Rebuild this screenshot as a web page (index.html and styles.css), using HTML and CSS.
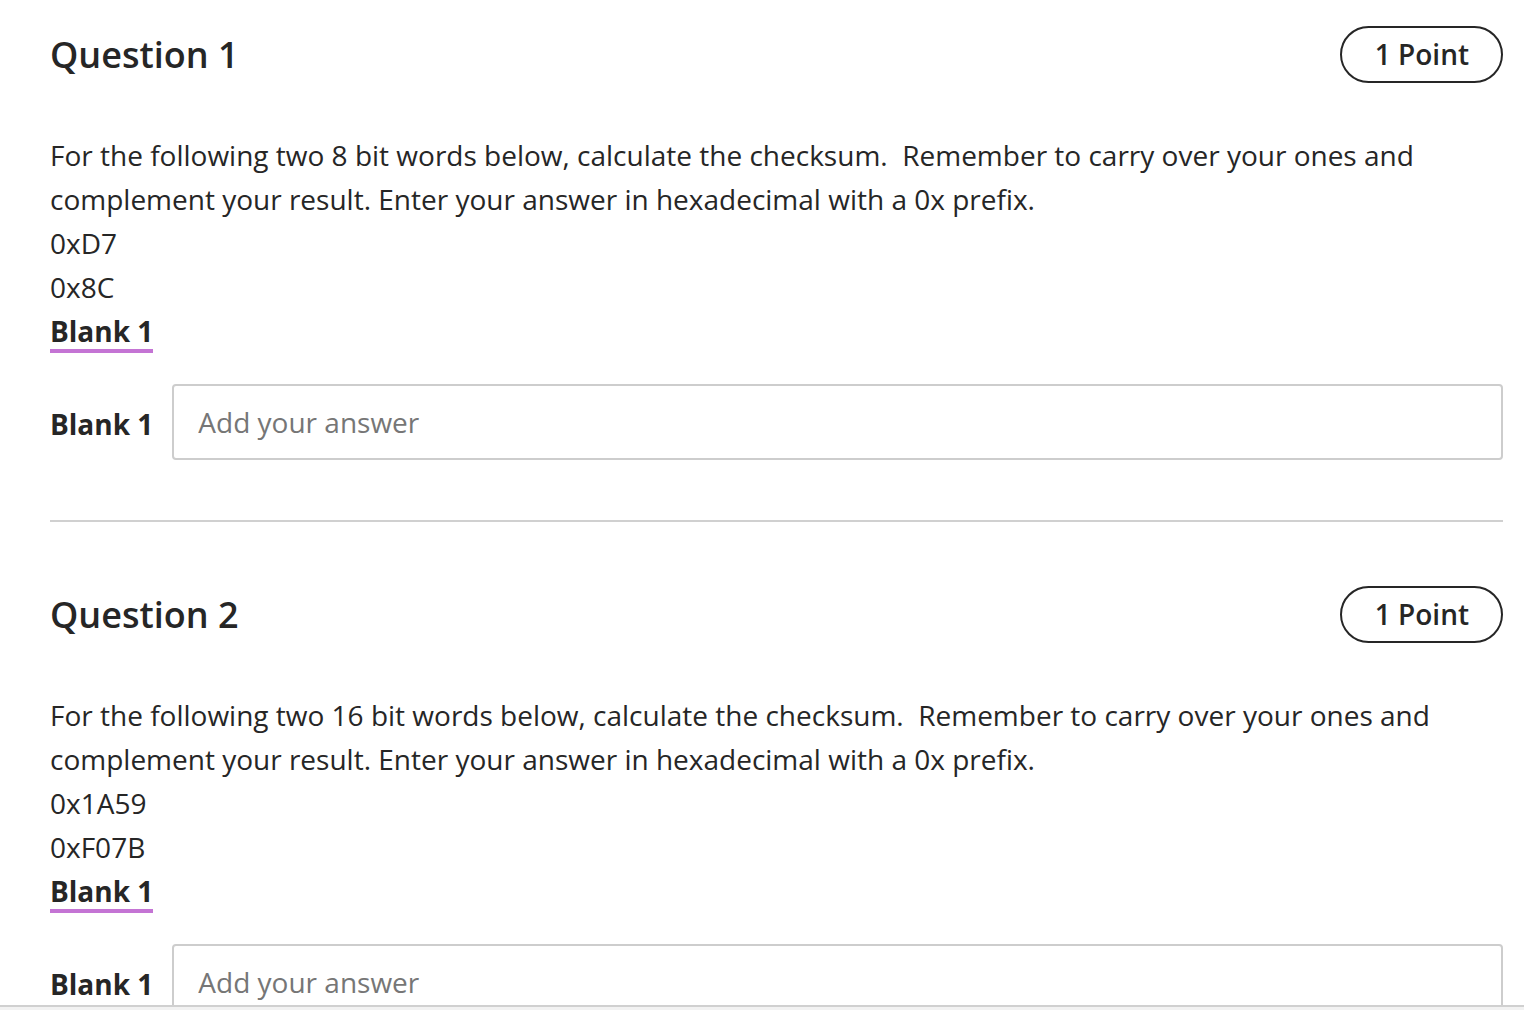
FILE: index.html
```html
<!DOCTYPE html>
<html lang="en">
<head>
    <meta charset="UTF-8">
    <meta name="viewport" content="width=device-width, initial-scale=1.0">
    <title>Checksum Quiz</title>
    <link rel="stylesheet" href="styles.css">
</head>
<body>
    <div class="quiz">
        <!-- Question 1 -->
        <section class="question">
            <div class="question-head">
                <h2>Question 1</h2>
                <span class="points">1 Point</span>
            </div>
            <div class="question-body">
                <p>For the following two 8 bit words below, calculate the checksum.&nbsp; Remember to carry over your ones and complement your result. Enter your answer in hexadecimal with a 0x prefix.</p>
                <p>0xD7</p>
                <p>0x8C</p>
                <span class="blank-tag">Blank 1</span>
            </div>
            <div class="answer-row">
                <label for="q1b1">Blank 1</label>
                <input type="text" id="q1b1" placeholder="Add your answer">
            </div>
        </section>

        <!-- Question 2 -->
        <section class="question">
            <div class="question-head">
                <h2>Question 2</h2>
                <span class="points">1 Point</span>
            </div>
            <div class="question-body">
                <p>For the following two 16 bit words below, calculate the checksum.&nbsp; Remember to carry over your ones and complement your result. Enter your answer in hexadecimal with a 0x prefix.</p>
                <p>0x1A59</p>
                <p>0xF07B</p>
                <span class="blank-tag">Blank 1</span>
            </div>
            <div class="answer-row">
                <label for="q2b1">Blank 1</label>
                <input type="text" id="q2b1" placeholder="Add your answer">
            </div>
        </section>
    </div>

    <div class="bottom-bar"></div>
</body>
</html>
```

FILE: styles.css
```css
:root {
    --text: #262626;
    --muted: #767676;
    --line: #d0d0d0;
    --accent: #c474d4;
}

body {
    font-family: 'Open Sans', 'Noto Sans', sans-serif;
    color: var(--text);
    background: #ffffff;
    margin: 0;
    overflow: hidden;
}

.quiz {
    padding: 0 21px 0 50px;
}

.question {
    padding: 64px 0 60px;
    border-bottom: 2px solid var(--line);
}

.question:first-child {
    padding-top: 26px;
}

.question-head {
    display: flex;
    justify-content: space-between;
    align-items: center;
}

.question-head h2 {
    margin: 0;
    font-size: 36px;
    font-weight: 600;
}

.points {
    display: inline-block;
    padding: 0 32px 0 33px;
    height: 53px;
    line-height: 53px;
    border: 2px solid var(--text);
    border-radius: 30px;
    font-size: 28px;
    font-weight: 600;
}

.question-body {
    margin-top: 50px;
    font-size: 28px;
    line-height: 44px;
}

.question-body p {
    margin: 0;
}

.blank-tag {
    display: inline-block;
    margin-top: 4px;
    line-height: 36px;
    font-weight: 700;
    border-bottom: 4px solid var(--accent);
}

.answer-row {
    display: flex;
    align-items: center;
    gap: 19px;
    margin-top: 31px;
}

.answer-row label {
    font-size: 28px;
    font-weight: 700;
    padding-top: 3px;
}

.answer-row input {
    flex: 1;
    height: 76px;
    box-sizing: border-box;
    padding: 0 24px;
    border: 2px solid #cdcdcd;
    border-radius: 4px;
    font-family: inherit;
    font-size: 28px;
    color: var(--text);
}

.answer-row input::placeholder {
    color: var(--muted);
}

.bottom-bar {
    position: fixed;
    left: 0;
    right: 0;
    bottom: 0;
    height: 3px;
    background: #f2f2f2;
    border-top: 2px solid var(--line);
}
```
